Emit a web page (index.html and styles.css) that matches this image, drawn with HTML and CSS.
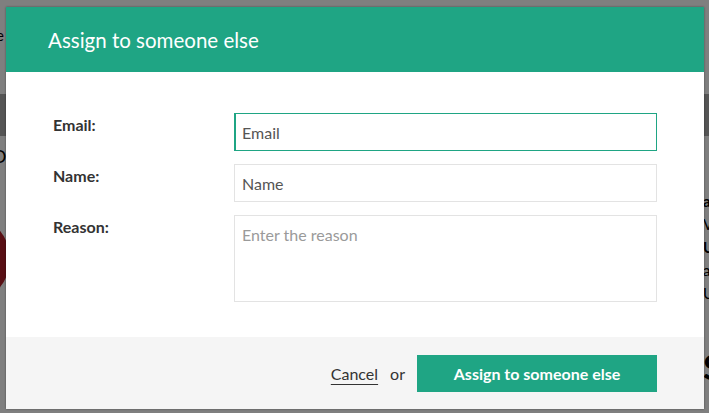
FILE: index.html
```html
<!DOCTYPE html>
<html>
<head>
<meta charset="utf-8">
<link rel="stylesheet" href="styles.css">
</head>
<body>
<div class="page">
  <div class="topline"><span class="crumb">e</span></div>
  <div class="band"></div>
  <div class="row-o"><span class="big-o">O</span></div>
  <div class="dot"></div>
  <div class="side">
    <div class="s1">a</div>
    <div class="s2">V</div>
    <div class="s3">U</div>
    <div class="s4">a</div>
    <div class="s5">U</div>
    <div class="s6">S</div>
  </div>
</div>
<div class="overlay"></div>
<div class="modal">
  <div class="modal-header">Assign to someone else</div>
  <form class="modal-body">
    <label class="lbl">Email:</label>
    <input class="field focused" type="text" placeholder="Email">
    <label class="lbl">Name:</label>
    <input class="field" type="text" placeholder="Name">
    <label class="lbl">Reason:</label>
    <textarea class="field area" placeholder="Enter the reason"></textarea>
  </form>
  <div class="modal-footer">
    <a class="cancel" href="#">Cancel</a>
    <span class="or">or</span>
    <button class="btn" type="button">Assign to someone else</button>
  </div>
</div>
</body>
</html>
```

FILE: styles.css
```css
html, body {
  margin: 0;
  padding: 0;
  height: 100%;
  overflow: hidden;
}
body {
  font-family: Lato, "Open Sans", sans-serif;
  background: #ffffff;
  position: relative;
}
.page {
  height: 413px;
  position: relative;
  color: #000;
}
.topline {
  height: 94px;
}
.crumb {
  position: absolute;
  left: -4px;
  top: 26px;
  font-size: 15px;
}
.band {
  height: 42px;
  background: #aaaaaa;
}
.big-o {
  position: absolute;
  left: -8px;
  top: 145px;
  font-size: 18px;
}
.dot {
  position: absolute;
  left: -80px;
  top: 214px;
  width: 90px;
  height: 90px;
  border-radius: 50%;
  background: #b01e28;
}
.side {
  position: absolute;
  left: 703px;
  top: 190px;
  font-size: 15px;
  line-height: 23px;
}
.s1, .s3 { font-weight: 700; }
.s6 {
  font-weight: 700;
  font-size: 34px;
  margin-top: 50px;
}
.overlay {
  position: absolute;
  inset: 0;
  background: rgba(0, 0, 0, 0.5);
}
.modal {
  position: absolute;
  left: 6px;
  top: 7px;
  width: 698px;
  background: #fff;
  box-shadow: 0 0 2px rgba(0,0,0,0.4);
  display: flex;
  flex-direction: column;
}
.modal-header {
  height: 65px;
  background: #1fa584;
  color: #fff;
  font-size: 20.5px;
  padding-left: 42px;
  display: flex;
  align-items: center;
  box-sizing: border-box;
}
.modal-body {
  display: grid;
  grid-template-columns: 181px 423px;
  row-gap: 13px;
  padding: 41px 0 35px 47px;
  margin: 0;
}
.lbl {
  font-weight: 700;
  font-size: 16px;
  color: #333;
  padding-top: 2px;
}
.field {
  box-sizing: border-box;
  height: 38px;
  border: 1px solid #e3e3e3;
  font-family: Lato, sans-serif;
  font-size: 16px;
  color: #555;
  padding: 0 7px;
  margin: 0;
  outline: none;
  background: #fff;
}
.field::placeholder {
  color: #555;
}
.field.focused {
  border-color: #1fa584;
  padding-left: 6px;
  border-left-width: 2px;
}
.area {
  height: 87px;
  resize: none;
  padding-top: 9px;
  display: block;
}
.area::placeholder {
  color: #9a9a9a;
}
.modal-footer {
  height: 72px;
  background: #f5f5f5;
  display: flex;
  align-items: center;
  justify-content: flex-end;
  padding-right: 47px;
  box-sizing: border-box;
}
.cancel {
  font-size: 16px;
  color: #333;
  text-decoration: underline;
  text-underline-offset: 4px;
}
.or {
  font-size: 16px;
  color: #333;
  margin: 0 12px 0 12px;
}
.btn {
  width: 240px;
  height: 37px;
  background: #1fa584;
  border: none;
  color: #fff;
  font-family: Lato, sans-serif;
  font-weight: 700;
  font-size: 16px;
  padding: 0;
}
```
